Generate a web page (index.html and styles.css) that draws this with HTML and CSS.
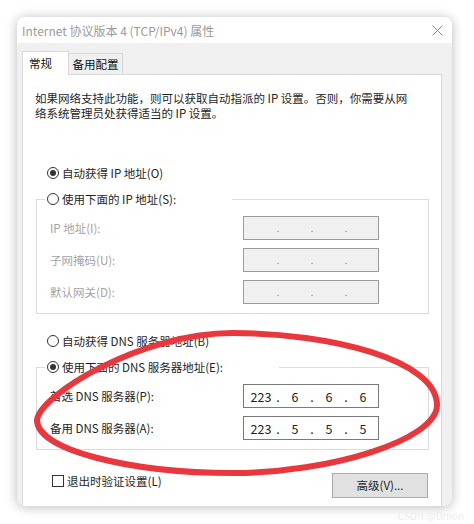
FILE: index.html
```html
<!DOCTYPE html>
<html>
<head>
  <meta charset="utf-8">
  <title>Internet 协议版本 4 (TCP/IPv4) 属性</title>
  <link rel="stylesheet" href="styles.css">
</head>
<body>
  <div class="dialog">
    <div class="titlebar">
      <span class="title">Internet 协议版本 4 (TCP/IPv4) 属性</span>
      <svg class="close" width="11" height="11" viewBox="0 0 11 11"><path d="M0.5 0.5L10.5 10.5M10.5 0.5L0.5 10.5" stroke="#8c8c8c" stroke-width="1" fill="none"/></svg>
    </div>

    <div class="frame">
      <div class="tabs">
        <div class="tab active">常规</div>
        <div class="tab">备用配置</div>
      </div>

      <div class="panel">
        <p class="intro">如果网络支持此功能，则可以获取自动指派的 IP 设置。否则，你需要从网<br>络系统管理员处获得适当的 IP 设置。</p>

        <div class="option first"><span class="radio checked"></span>自动获得 IP 地址(O)</div>

        <fieldset class="group">
          <legend class="option"><span class="radio"></span>使用下面的 IP 地址(S):</legend>
          <div class="field disabled">
            <span class="field-label">IP 地址(I):</span>
            <span class="ipbox"><span class="seg"></span><span class="dot">.</span><span class="seg"></span><span class="dot">.</span><span class="seg"></span><span class="dot">.</span><span class="seg"></span></span>
          </div>
          <div class="field disabled">
            <span class="field-label">子网掩码(U):</span>
            <span class="ipbox"><span class="seg"></span><span class="dot">.</span><span class="seg"></span><span class="dot">.</span><span class="seg"></span><span class="dot">.</span><span class="seg"></span></span>
          </div>
          <div class="field disabled">
            <span class="field-label">默认网关(D):</span>
            <span class="ipbox"><span class="seg"></span><span class="dot">.</span><span class="seg"></span><span class="dot">.</span><span class="seg"></span><span class="dot">.</span><span class="seg"></span></span>
          </div>
        </fieldset>

        <div class="option dns"><span class="radio"></span>自动获得 DNS 服务器地址(B)</div>

        <fieldset class="group">
          <legend class="option"><span class="radio checked"></span>使用下面的 DNS 服务器地址(E):</legend>
          <div class="field">
            <span class="field-label">首选 DNS 服务器(P):</span>
            <span class="ipbox"><span class="seg">223</span><span class="dot">.</span><span class="seg">6</span><span class="dot">.</span><span class="seg">6</span><span class="dot">.</span><span class="seg">6</span></span>
          </div>
          <div class="field">
            <span class="field-label">备用 DNS 服务器(A):</span>
            <span class="ipbox"><span class="seg">223</span><span class="dot">.</span><span class="seg">5</span><span class="dot">.</span><span class="seg">5</span><span class="dot">.</span><span class="seg">5</span></span>
          </div>
        </fieldset>

        <div class="footer">
          <div class="check"><span class="checkbox"></span>退出时验证设置(L)</div>
          <div class="button">高级(V)...</div>
        </div>
      </div>
    </div>
  </div>

  <div class="watermark">CSDN @Dmon</div>

  <svg class="mark" width="474" height="524" viewBox="0 0 474 524">
    <path d="M37 420 C40 395 140 333 233 333 C330 333 437 360 437 405 C437 440 330 473 233 473 C130 473 37 450 37 420 Z" fill="none" stroke="#e8383d" stroke-width="6"/>
  </svg>
</body>
</html>
```

FILE: styles.css
```css
body { margin: 0; padding: 17px 0 0 17px; background: #fff; font-family: "Microsoft YaHei", "Noto Sans CJK SC", sans-serif; font-size: 11.5px; color: #1e1e1e; }

.dialog { width: 435px; height: 489px; background: #f0f0f0; border-radius: 8px; box-shadow: 0 1px 12px rgba(0, 0, 0, 0.28); overflow: hidden; display: flex; flex-direction: column; }
.titlebar { height: 26px; flex-shrink: 0; background: #fff; display: flex; align-items: center; justify-content: space-between; padding: 0 9px 0 5px; }
.title { color: #9a9a9a; font-size: 12px; }

.frame { flex: 1; display: flex; flex-direction: column; padding: 8px 10px 0 5px; }
.tabs { display: flex; align-items: flex-end; height: 23px; }
.tab { box-sizing: border-box; height: 21px; line-height: 20px; width: 54px; text-align: center; border: 1px solid #d9d9d9; border-bottom: none; border-left: none; background: #f0f0f0; color: #111; }
.tab.active { position: relative; width: 47px; height: 24px; line-height: 22px; margin-bottom: -1px; text-align: left; padding-left: 6px; background: #fff; border-left: 1px solid #d9d9d9; }

.panel { flex: 1; background: #fff; border: 1px solid #d9d9d9; border-bottom: none; padding: 16px 12px 0 12px; }
.intro { margin: 0; line-height: 15px; }

.option { display: flex; align-items: center; height: 16px; line-height: 16px; }
.option.first { margin: 44px 0 0 12px; }
.option.dns { margin: 19px 0 0 12px; }
.radio { box-sizing: border-box; width: 12px; height: 12px; border: 1px solid #333; border-radius: 50%; margin-right: 3px; display: flex; align-items: center; justify-content: center; }
.radio.checked::after { content: ""; width: 6px; height: 6px; border-radius: 50%; background: #333; }

.group { margin: 10px 0 0 1px; padding: 9px 13px 9px; border: 1px solid #dcdcdc; min-width: 0; }
.group legend { padding: 0 56px 0 2px; margin-left: -5px; }

.field { display: flex; align-items: center; height: 24px; }
.field + .field { margin-top: 8px; }
.field-label { width: 193px; }
.field.disabled .field-label { color: #a3a3a3; }

.ipbox { box-sizing: border-box; width: 136px; height: 24px; border: 1px solid #7a7a7a; background: #fff; display: flex; align-items: center; padding-left: 2px; font-size: 12.5px; color: #222; }
.field.disabled .ipbox { background: #f0f0f0; border-color: #9b9b9b; color: #888; font-size: 9px; }
.seg { width: 30px; text-align: center; }
.dot { width: 4px; text-align: center; }

.footer { display: flex; justify-content: space-between; align-items: flex-start; margin: 23px 1px 0 17px; }
.check { display: flex; align-items: center; height: 16px; }
.checkbox { box-sizing: border-box; width: 12px; height: 12px; border: 1px solid #333; margin-right: 3px; }
.button { box-sizing: border-box; width: 96px; height: 25px; line-height: 23px; text-align: center; background: #e1e1e1; border: 1px solid #adadad; }

.watermark { width: 447px; text-align: right; margin-top: 3px; font-size: 10px; line-height: 13px; color: #ededed; }
.mark { position: absolute; left: 0; top: 0; pointer-events: none; }
```
